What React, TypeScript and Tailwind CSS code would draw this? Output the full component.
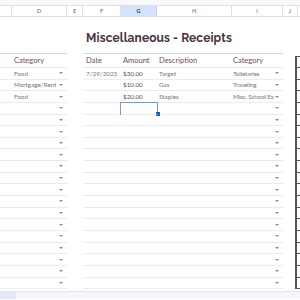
import React from "react";

const GRID = "grid grid-cols-[12px_55px_16px_38px_36px_75px_51px_12px_6px]";

type Row = { left?: string; date?: string; amount?: string; desc?: string; cat?: string; selected?: boolean };

const rows: Row[] = [
  { left: "Food", date: "7/29/2023", amount: "$30.00", desc: "Target", cat: "Toiletaries" },
  { left: "Mortgage/Rent", amount: "$10.00", desc: "Gas", cat: "Traveling" },
  { left: "Food", amount: "$20.00", desc: "Staples", cat: "Misc. School Ex" },
  { selected: true },
  ...Array.from({ length: 15 }, () => ({})),
];

function Arrow() {
  return <span className="ml-auto mr-[4px] h-0 w-0 shrink-0 border-x-[2px] border-t-[2.5px] border-x-transparent border-t-[#8a8a8a]" />;
}

export default function App() {
  return (
    <div className="relative h-[300px] w-[300px] overflow-hidden bg-white font-['Lato','Liberation_Sans',sans-serif]">
      <div className="h-[5px] bg-[#f8f9fa]" />
      {/* column letters */}
      <div className="flex h-[12px] border-y border-[#e0e0e0] text-[5.5px] text-[#666]">
        <div className="w-[12px] border-r border-[#e0e0e0]" />
        <div className="flex w-[55px] items-center justify-center border-r border-[#e0e0e0]">D</div>
        <div className="flex w-[16px] items-center justify-center border-r border-[#e0e0e0]">E</div>
        <div className="flex w-[38px] items-center justify-center border-r border-[#e0e0e0]">F</div>
        <div className="flex w-[36px] items-center justify-center border-r border-[#c2d4f4] bg-[#d3e3fd] font-bold text-[#1f3b6a]">G</div>
        <div className="flex w-[75px] items-center justify-center border-r border-[#e0e0e0]">H</div>
        <div className="flex w-[51px] items-center justify-center border-r border-[#e0e0e0]">I</div>
        <div className="flex w-[15px] items-center justify-center border-r border-[#e0e0e0]">J</div>
      </div>

      {/* title */}
      <div className="flex h-[36px] items-center pl-[86px] pt-[6px]">
        <h1 className="font-['Raleway','Lato',sans-serif] text-[12px] font-bold tracking-[0.1px] text-[#4b3240]">
          Miscellaneous - Receipts
        </h1>
      </div>

      {/* table header */}
      <div className={`${GRID} h-[14px] text-[7.5px] text-[#6e4c5a]`}>
        <div className="border-t border-[#d6d6d6]" />
        <div className="flex items-center border-t border-[#d6d6d6] pl-[2px]">Category</div>
        <div />
        <div className="flex items-center border-t border-[#d6d6d6] pl-[3px]">Date</div>
        <div className="flex items-center border-t border-[#d6d6d6] pl-[2px]">Amount</div>
        <div className="flex items-center border-t border-[#d6d6d6] pl-[2px]">Description</div>
        <div className="flex items-center border-t border-[#d6d6d6] pl-[1px]">Category</div>
        <div />
        <div className="mt-[3px] border-l-2 border-t border-[#555]" />
      </div>

      {rows.map((r, i) => (
        <div key={i} className={`${GRID} h-[11.65px] text-[6.3px] text-[#777]`}>
          <div className="border-t border-[#ececec]" />
          <div className="flex items-center overflow-hidden border-t border-[#ececec] pl-[2px]">
            <span className="min-w-0 overflow-hidden whitespace-nowrap">{r.left}</span>
            <Arrow />
          </div>
          <div />
          <div className="flex items-center border-t border-[#ececec] pl-[3px]">{r.date}</div>
          <div className="relative flex items-center border-t border-[#ececec] pl-[2px] text-[#555]">
            {r.amount}
            {r.selected && (
              <>
                <div className="absolute inset-[-1px] border-[1.5px] border-[#6f9ae8]" />
                <div className="absolute bottom-[-2.5px] right-[-2.5px] h-[4px] w-[4px] bg-[#1a5fd0]" />
              </>
            )}
          </div>
          <div className="flex items-center border-t border-[#ececec] pl-[2px]">{r.desc}</div>
          <div className="flex items-center border-t border-[#ececec] pl-[1px]">
            <span className="whitespace-nowrap tracking-[-0.15px]">{r.cat}</span>
            <Arrow />
          </div>
          <div />
          <div className="border-l-2 border-t border-[#555]" />
        </div>
      ))}
      <div className={`${GRID} h-[3px]`}>
        <div className="col-span-2 border-t border-[#ececec]" />
        <div />
        <div className="col-span-4 border-t border-[#ececec]" />
        <div />
        <div className="border-t border-[#555]" />
      </div>

      {/* bottom bar */}
      <div className="flex h-[8px] border-t border-[#e3e3e3] bg-[#f5f6fb]">
        <div className="w-[16px] bg-[#e3eaf7]" />
      </div>
    </div>
  );
}
